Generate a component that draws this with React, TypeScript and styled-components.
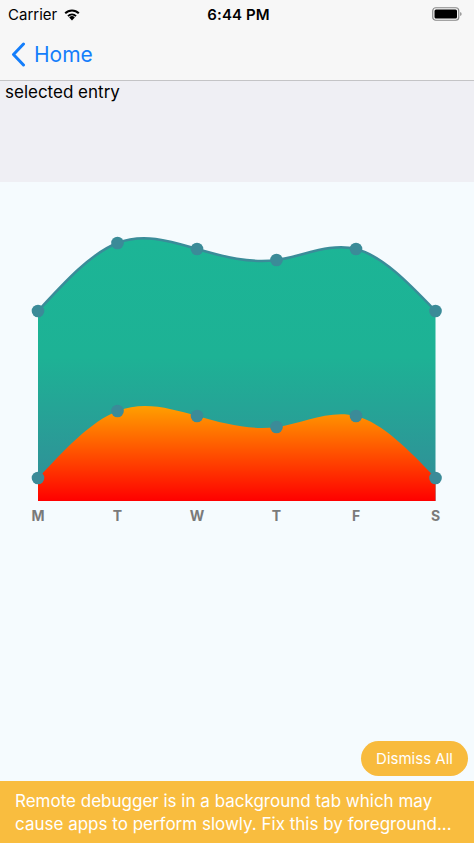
import { FC, useMemo } from "react"
import styled, { createGlobalStyle } from "styled-components"

const GlobalStyle = createGlobalStyle`
    html, body {
        margin: 0;
        padding: 0;
        background: #f5fbfe;
    }
    body {
        font-family: Inter, "Liberation Sans", sans-serif;
        -webkit-font-smoothing: antialiased;
    }
`

const Screen = styled.div`
    width: 474px;
    height: 843px;
    display: flex;
    flex-direction: column;
    overflow: hidden;
    background: #f5fbfe;
`

const StatusBar = styled.div`
    height: 28px;
    padding: 0 8px;
    display: grid;
    grid-template-columns: 1fr auto 1fr;
    align-items: center;
    background: #f7f7f7;
    color: #000;
    font-size: 15px;
`

const StatusLeft = styled.div`
    display: flex;
    align-items: center;
    gap: 6px;
`

const StatusTime = styled.div`
    font-weight: 600;
    letter-spacing: 0.1px;
    padding-left: 3px;
`

const StatusRight = styled.div`
    display: flex;
    justify-content: flex-end;
    padding-right: 4px;
`

const NavBar = styled.div`
    height: 53px;
    display: flex;
    align-items: center;
    padding-left: 11px;
    background: #f7f7f7;
    border-bottom: 1px solid #c4c4c6;
    box-sizing: border-box;
`

const BackButton = styled.button`
    display: flex;
    align-items: center;
    gap: 8px;
    border: none;
    background: none;
    padding: 0;
    color: #147efb;
    font-family: inherit;
    font-size: 21px;
    cursor: pointer;
`

const SelectedPanel = styled.div`
    height: 101px;
    background: #efeff4;
    padding: 0 5px;
    box-sizing: border-box;
    font-size: 17px;
    line-height: 22px;
    color: #000;
`

const ChartArea = styled.div`
    flex: 1;
    display: flex;
    flex-direction: column;
    background: #f5fbfe;
`

const DismissRow = styled.div`
    margin-top: auto;
    display: flex;
    justify-content: flex-end;
    padding: 0 6px 5px 0;
`

const DismissButton = styled.button`
    width: 107px;
    height: 35px;
    border: none;
    border-radius: 18px;
    background: #f8bb3d;
    color: #fff;
    font-family: inherit;
    font-size: 15px;
`

const Banner = styled.div`
    height: 62px;
    box-sizing: border-box;
    padding: 9px 15px 0;
    background: #f9bd3f;
    color: #fff;
    font-size: 17px;
    line-height: 23px;
    white-space: nowrap;
`

type Point = [number, number]

// d3-style natural cubic spline control points for one coordinate
const controlPoints = (x: number[]) => {
    const n = x.length - 1
    const a = new Array<number>(n)
    const b = new Array<number>(n)
    const r = new Array<number>(n)
    a[0] = 0; b[0] = 2; r[0] = x[0] + 2 * x[1]
    for (let i = 1; i < n - 1; ++i) { a[i] = 1; b[i] = 4; r[i] = 4 * x[i] + 2 * x[i + 1] }
    a[n - 1] = 2; b[n - 1] = 7; r[n - 1] = 8 * x[n - 1] + x[n]
    for (let i = 1; i < n; ++i) {
        const m = a[i] / b[i - 1]
        b[i] -= m
        r[i] -= m * r[i - 1]
    }
    a[n - 1] = r[n - 1] / b[n - 1]
    for (let i = n - 2; i >= 0; --i) a[i] = (r[i] - a[i + 1]) / b[i]
    b[n - 1] = (x[n] + a[n - 1]) / 2
    for (let i = 0; i < n - 1; ++i) b[i] = 2 * x[i + 1] - a[i + 1]
    return [a, b]
}

const naturalLine = (pts: Point[]) => {
    const xs = pts.map(p => p[0])
    const ys = pts.map(p => p[1])
    const [ax, bx] = controlPoints(xs)
    const [ay, by] = controlPoints(ys)
    let d = `M${xs[0]},${ys[0]}`
    for (let i = 0; i < pts.length - 1; i++) {
        d += `C${ax[i]},${ay[i]},${bx[i]},${by[i]},${xs[i + 1]},${ys[i + 1]}`
    }
    return d
}

const DAYS = ["M", "T", "W", "T", "F", "S"]
const COLUMNS = [38, 117.5, 197, 276.5, 356, 435.5]
const UPPER = [129, 61, 67, 78, 67, 129]
const LOWER = [296, 229, 234, 245, 234, 296]
const BASELINE = 319

const AreaChart: FC = () => {
    const upper = useMemo(() => COLUMNS.map((x, i) => [x, UPPER[i]] as Point), [])
    const lower = useMemo(() => COLUMNS.map((x, i) => [x, LOWER[i]] as Point), [])
    const upperLine = naturalLine(upper)
    const lowerLine = naturalLine(lower)
    const close = `L${COLUMNS[5]},${BASELINE}L${COLUMNS[0]},${BASELINE}Z`

    return (
        <svg width={474} height={345} viewBox="0 0 474 345">
            <defs>
                <linearGradient id="tealFill" x1="0" y1="0" x2="0" y2="1">
                    <stop offset="0" stopColor="#1cb596" />
                    <stop offset="0.45" stopColor="#1db295" />
                    <stop offset="1" stopColor="#338b98" />
                </linearGradient>
                <linearGradient id="fireFill" x1="0" y1="0" x2="0" y2="1">
                    <stop offset="0" stopColor="#ff9f00" />
                    <stop offset="1" stopColor="#ff0000" />
                </linearGradient>
            </defs>
            <path d={upperLine + close} fill="url(#tealFill)" />
            <path d={upperLine} fill="none" stroke="#3a8c99" strokeWidth={2.5} />
            <path d={lowerLine + close} fill="url(#fireFill)" />
            {upper.map(([x, y], i) => (
                <circle key={`u${i}`} cx={x} cy={y} r={6.3} fill="#3b8b98" />
            ))}
            {lower.map(([x, y], i) => (
                <circle key={`l${i}`} cx={x} cy={y} r={6.3} fill="#3b8b98" />
            ))}
            {DAYS.map((day, i) => (
                <text
                    key={i}
                    x={COLUMNS[i]}
                    y={339}
                    textAnchor="middle"
                    fontFamily="Inter, 'Liberation Sans', sans-serif"
                    fontWeight={700}
                    fontSize={14}
                    fill="#7a7a7a"
                >
                    {day}
                </text>
            ))}
        </svg>
    )
}

const WifiIcon: FC = () => (
    <svg width="18" height="13" viewBox="0 0 18 13">
        <path d="M9 12.5 L6.2 9.4 A4 4 0 0 1 11.8 9.4 Z" fill="#000" />
        <path d="M4.3 7.4 A6.8 6.8 0 0 1 13.7 7.4 L12.4 8.8 A5 5 0 0 0 5.6 8.8 Z" fill="#000" />
        <path d="M1.5 4.5 A10.6 10.6 0 0 1 16.5 4.5 L15.1 6 A8.6 8.6 0 0 0 2.9 6 Z" fill="#000" />
    </svg>
)

const BatteryIcon: FC = () => (
    <svg width="30" height="14" viewBox="0 0 30 14">
        <rect x="0.75" y="0.75" width="26" height="12.5" rx="3" fill="none" stroke="#888" strokeWidth="1.2" />
        <rect x="2.5" y="2.5" width="22.5" height="9" rx="1.5" fill="#000" />
        <path d="M28.2 5 Q29.6 5.4 29.6 7 Q29.6 8.6 28.2 9 Z" fill="#888" />
    </svg>
)

const BackChevron: FC = () => (
    <svg width="15" height="25" viewBox="0 0 15 25">
        <path d="M12.5 2 L2.5 12.5 L12.5 23" fill="none" stroke="#147efb" strokeWidth="3" strokeLinecap="round" strokeLinejoin="round" />
    </svg>
)

const App: FC = () => {
    return (
        <>
            <GlobalStyle />
            <Screen>
                <StatusBar>
                    <StatusLeft>
                        Carrier
                        <WifiIcon />
                    </StatusLeft>
                    <StatusTime>6:44 PM</StatusTime>
                    <StatusRight>
                        <BatteryIcon />
                    </StatusRight>
                </StatusBar>
                <NavBar>
                    <BackButton>
                        <BackChevron />
                        Home
                    </BackButton>
                </NavBar>
                <SelectedPanel>selected entry</SelectedPanel>
                <ChartArea>
                    <AreaChart />
                    <DismissRow>
                        <DismissButton>Dismiss All</DismissButton>
                    </DismissRow>
                    <Banner>
                        Remote debugger is in a background tab which may<br />
                        cause apps to perform slowly. Fix this by foreground...
                    </Banner>
                </ChartArea>
            </Screen>
        </>
    )
}

export default App
